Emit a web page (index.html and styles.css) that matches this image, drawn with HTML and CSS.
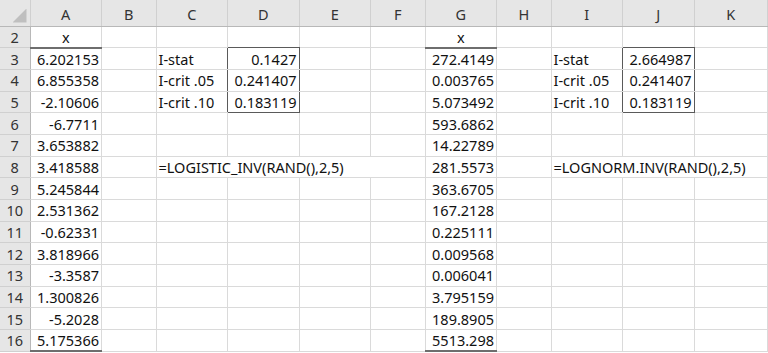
FILE: index.html
```html
<!DOCTYPE html>
<html lang="en">
<head>
    <meta charset="UTF-8">
    <title>Sheet1</title>
    <link rel="stylesheet" href="styles.css">
</head>
<body>
    <table class="sheet">
        <colgroup>
            <col class="c-hdr"><col class="c-w"><col class="c-n"><col class="c-w"><col class="c-w"><col class="c-w">
            <col class="c-n"><col class="c-w"><col class="c-n"><col class="c-w"><col class="c-w"><col>
        </colgroup>
        <thead>
            <tr class="hdr">
                <th class="corner"><span class="tri"></span></th>
                <th>A</th><th>B</th><th>C</th><th>D</th><th>E</th><th>F</th>
                <th>G</th><th>H</th><th>I</th><th>J</th><th>K</th>
            </tr>
        </thead>
        <tbody>
            <tr><th>2</th><td class="ctr thick">x</td><td></td><td></td><td class="box-top"></td><td></td><td></td><td class="ctr thick">x</td><td></td><td></td><td class="box-top"></td><td></td></tr>
            <tr><th>3</th><td class="num">6.202153</td><td></td><td class="box-left">I-stat</td><td class="num box">0.1427</td><td></td><td></td><td class="num">272.4149</td><td></td><td class="box-left">I-stat</td><td class="num box">2.664987</td><td></td></tr>
            <tr><th>4</th><td class="num">6.855358</td><td></td><td class="box-left">I-crit .05</td><td class="num box">0.241407</td><td></td><td></td><td class="num">0.003765</td><td></td><td class="box-left">I-crit .05</td><td class="num box">0.241407</td><td></td></tr>
            <tr><th>5</th><td class="num">-2.10606</td><td></td><td class="box-left">I-crit .10</td><td class="num box box-end">0.183119</td><td></td><td></td><td class="num">5.073492</td><td></td><td class="box-left">I-crit .10</td><td class="num box box-end">0.183119</td><td></td></tr>
            <tr><th>6</th><td class="num">-6.7711</td><td></td><td></td><td></td><td></td><td></td><td class="num">593.6862</td><td></td><td></td><td></td><td></td></tr>
            <tr><th>7</th><td class="num">3.653882</td><td></td><td></td><td></td><td></td><td></td><td class="num">14.22789</td><td></td><td></td><td></td><td></td></tr>
            <tr><th>8</th><td class="num">3.418588</td><td></td><td colspan="4">=LOGISTIC_INV(RAND(),2,5)</td><td class="num">281.5573</td><td></td><td colspan="3">=LOGNORM.INV(RAND(),2,5)</td></tr>
            <tr><th>9</th><td class="num">5.245844</td><td></td><td></td><td></td><td></td><td></td><td class="num">363.6705</td><td></td><td></td><td></td><td></td></tr>
            <tr><th>10</th><td class="num">2.531362</td><td></td><td></td><td></td><td></td><td></td><td class="num">167.2128</td><td></td><td></td><td></td><td></td></tr>
            <tr><th>11</th><td class="num">-0.62331</td><td></td><td></td><td></td><td></td><td></td><td class="num">0.225111</td><td></td><td></td><td></td><td></td></tr>
            <tr><th>12</th><td class="num">3.818966</td><td></td><td></td><td></td><td></td><td></td><td class="num">0.009568</td><td></td><td></td><td></td><td></td></tr>
            <tr><th>13</th><td class="num">-3.3587</td><td></td><td></td><td></td><td></td><td></td><td class="num">0.006041</td><td></td><td></td><td></td><td></td></tr>
            <tr><th>14</th><td class="num">1.300826</td><td></td><td></td><td></td><td></td><td></td><td class="num">3.795159</td><td></td><td></td><td></td><td></td></tr>
            <tr><th>15</th><td class="num">-5.2028</td><td></td><td></td><td></td><td></td><td></td><td class="num">189.8905</td><td></td><td></td><td></td><td></td></tr>
            <tr><th>16</th><td class="num thick">5.175366</td><td></td><td></td><td></td><td></td><td></td><td class="num thick">5513.298</td><td></td><td></td><td></td><td></td></tr>
        </tbody>
    </table>
</body>
</html>
```

FILE: styles.css
```css
body {
    margin: 0;
    background: #fff;
    font-family: "Noto Sans", "Open Sans", sans-serif;
    font-size: 14.5px;
    color: #111;
    overflow: hidden;
}
.sheet {
    border-collapse: collapse;
    table-layout: fixed;
    width: 768px;
}
.c-hdr { width: 30px; }
.c-w { width: 71.5px; }
.c-n { width: 54.5px; }

tr {
    height: 21.7px;
}
.hdr {
    height: 26px;
}
.hdr th {
    background: #e6e6e6;
    font-weight: normal;
    color: #333;
    border-right: 1px solid #d0d0d0;
    border-bottom: 1px solid #b8b8b8;
    padding: 2px 0 0;
    text-align: center;
}
tbody th {
    background: #e6e6e6;
    font-weight: normal;
    color: #333;
    border-right: 1px solid #b8b8b8;
    border-bottom: 1px solid #d0d0d0;
    padding: 0;
    text-align: center;
}
.corner {
    position: relative;
}
.tri {
    position: absolute;
    right: 3px;
    bottom: 3px;
    width: 14px;
    height: 14px;
    background: #bfbfbf;
    clip-path: polygon(100% 0, 100% 100%, 0 100%);
}
td {
    border-right: 1px solid #dadada;
    border-bottom: 1px solid #dadada;
    padding: 0 2px;
    white-space: nowrap;
    overflow: visible;
    line-height: 20px;
}
.num {
    text-align: right;
}
.ctr {
    text-align: center;
}
.thick {
    border-bottom: 2px solid #6e6e6e;
}
.box-top {
    border-bottom-color: #5a5a5a;
}
.box-left {
    border-right-color: #5a5a5a;
}
.box {
    border-right-color: #5a5a5a;
}
.box-end {
    border-bottom-color: #5a5a5a;
}
```
